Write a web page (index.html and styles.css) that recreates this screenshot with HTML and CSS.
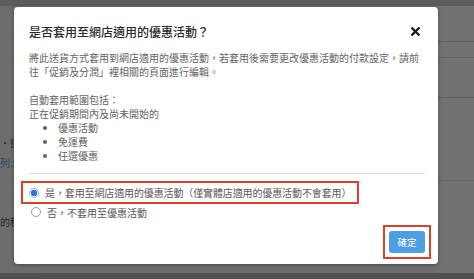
FILE: index.html
```html
<!DOCTYPE html>
<html lang="zh-Hant">
<head>
<meta charset="utf-8">
<link rel="stylesheet" href="styles.css">
</head>
<body>
<div class="page">
  <div class="topband"></div>
  <div class="bg">
    <div class="bg-left">
      <div class="bg-t1">・掛號</div>
      <div class="bg-t2">列.xls</div>
      <div class="bg-t3">的種類</div>
    </div>
    <div class="bg-mid"></div>
    <div class="bg-right">
      <div class="rl rl1"></div>
      <div class="rl rl2"></div>
      <div class="rl rl3"></div>
      <div class="rl rl4"></div>
    </div>
  </div>
  <div class="bottomband"></div>
</div>

<div class="modal">
  <div class="modal-header">
    <h2 class="modal-title">是否套用至網店適用的優惠活動？</h2>
    <span class="close" aria-label="close">
      <svg width="9" height="9" viewBox="0 0 9 9"><path d="M1.3 1.3 L7.7 7.7 M7.7 1.3 L1.3 7.7" stroke="#1e1e1e" stroke-width="2.3" stroke-linecap="square"/></svg>
    </span>
  </div>
  <div class="modal-body">
    <p class="para">將此送貨方式套用到網店適用的優惠活動，若套用後需要更改優惠活動的付款設定，請前往「促銷及分潤」裡相關的頁面進行編輯。</p>
    <p class="para">自動套用範圍包括：<br>正在促銷期間內及尚未開始的</p>
    <ul class="list">
      <li>優惠活動</li>
      <li>免運費</li>
      <li>任選優惠</li>
    </ul>
    <div class="divider"></div>
    <div class="options">
      <label class="opt opt-hl"><span class="radio checked"></span><span class="opt-text">是，套用至網店適用的優惠活動（僅實體店適用的優惠活動不會套用）</span></label>
      <label class="opt"><span class="radio"></span><span class="opt-text">否，不套用至優惠活動</span></label>
    </div>
  </div>
  <div class="modal-footer">
    <div class="btn-hl"><button class="btn">確定</button></div>
  </div>
</div>
</body>
</html>
```
FILE: styles.css
```css
html, body {
  margin: 0;
  padding: 0;
}
body {
  width: 474px;
  height: 279px;
  overflow: hidden;
  background: #6c6c6c;
  font-family: "Noto Sans CJK TC", "Noto Sans", "Liberation Sans", sans-serif;
  position: relative;
}
.page {
  display: flex;
  flex-direction: column;
  height: 279px;
}
.topband {
  height: 6px;
  background: #5c5c5e;
}
.bg {
  flex: 1;
  display: flex;
}
.bg-left {
  width: 40px;
  background: #6d6d6d;
  font-size: 10px;
  line-height: 12px;
  color: #2c2c2c;
  white-space: nowrap;
  overflow: hidden;
}
.bg-t1 { margin-top: 131px; }
.bg-t2 { margin-top: 8px; color: #2c4a78; }
.bg-t3 { margin-top: 47px; }
.bg-mid {
  flex: 1;
  background: #6e6e6e;
}
.bg-right {
  width: 40px;
  background: #727272;
  display: flex;
  flex-direction: column;
}
.rl {
  height: 1px;
  background: #5f5f5f;
}
.rl1 { margin-top: 35px; }
.rl2 { margin-top: 15px; background: #666; }
.rl3 { margin-top: 39px; }
.rl4 { margin-top: 82px; background: #666; }
.bottomband {
  height: 6px;
  background: #505050;
}

.modal {
  position: absolute;
  left: 14px;
  top: 7px;
  width: 424px;
  height: 257px;
  box-sizing: border-box;
  background: #fff;
  border-radius: 4px;
  box-shadow: 0 1px 4px rgba(0,0,0,0.35);
  display: flex;
  flex-direction: column;
}
.modal-header {
  display: flex;
  align-items: center;
  justify-content: space-between;
  padding: 17px 18px 0 15px;
  height: 16px;
  box-sizing: content-box;
}
.modal-title {
  margin: 0;
  font-size: 12px;
  line-height: 16px;
  font-weight: 500;
  color: #2a2a2a;
}
.close {
  display: flex;
  width: 9px;
  height: 9px;
  margin-top: -2px;
}
.modal-body {
  padding: 11px 13px 0 15px;
}
.para {
  margin: 0 0 14px 0;
  font-size: 10px;
  line-height: 14px;
  color: #646464;
}
.para + .para { margin-bottom: 0; }
.list {
  margin: 0;
  padding-left: 29px;
  font-size: 10px;
  line-height: 14px;
  color: #646464;
}
.divider {
  margin-top: 10px;
  height: 1px;
  background: #dedede;
}
.options {
  margin-top: 7px;
  margin-left: -8px;
  display: flex;
  flex-direction: column;
}
.opt {
  display: flex;
  align-items: center;
  gap: 6px;
  height: 16px;
  padding-left: 10px;
  font-size: 10px;
  color: #5a5a5a;
}
.opt-hl {
  align-self: flex-start;
  height: 19px;
  padding: 0 6px 0 6px;
  border: 2px solid #d9412e;
}
.opt-hl .opt-text {
  letter-spacing: -0.12px;
}
.radio {
  width: 8px;
  height: 8px;
  border-radius: 50%;
  border: 1px solid #9a9a9a;
  background: #fff;
  flex: none;
}
.radio.checked {
  border-color: #8db8f2;
  background: radial-gradient(circle, #2f6fe0 0 3px, #fff 3.3px);
}
.modal-footer {
  margin-top: auto;
  display: flex;
  justify-content: flex-end;
  padding: 0 7px 5px 0;
}
.btn-hl {
  border: 2px solid #d9412e;
  padding: 4px;
}
.btn {
  display: block;
  width: 36px;
  height: 22px;
  border: none;
  border-radius: 3px;
  background: #4d9ee3;
  color: #fff;
  font-family: "Noto Sans CJK TC", sans-serif;
  font-size: 9.5px;
  padding: 0;
}
```
